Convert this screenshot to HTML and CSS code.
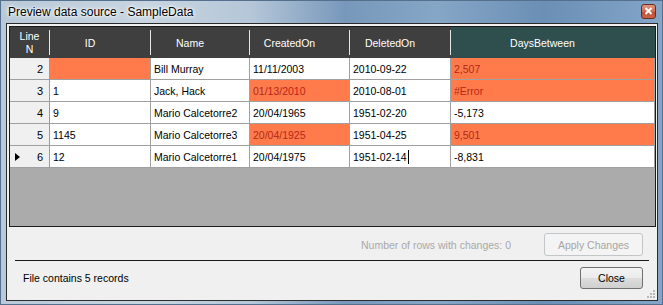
FILE: index.html
```html
<!DOCTYPE html>
<html lang="en">
<head>
    <meta charset="UTF-8">
    <title>Preview data source - SampleData</title>
    <link rel="stylesheet" href="styles.css">
</head>
<body>
    <div class="window">
        <div class="titlebar">
            <span class="title">Preview data source - SampleData</span>
            <span class="close-x">
                <svg width="9" height="8" viewBox="0 0 9 8"><path d="M1.5 1 L7.5 7 M7.5 1 L1.5 7" stroke="#fff" stroke-width="2"/></svg>
            </span>
        </div>
        <div class="client">
            <div class="grid">
                <div class="table">
                    <div class="hd corner">Line<br>N</div>
                    <div class="hd">ID</div>
                    <div class="hd">Name</div>
                    <div class="hd">CreatedOn</div>
                    <div class="hd">DeletedOn</div>
                    <div class="hd days">DaysBetween</div>

                    <div class="rh">2</div>
                    <div class="cell bad"></div>
                    <div class="cell">Bill Murray</div>
                    <div class="cell">11/11/2003</div>
                    <div class="cell">2010-09-22</div>
                    <div class="cell bad">2,507</div>

                    <div class="rh">3</div>
                    <div class="cell">1</div>
                    <div class="cell">Jack, Hack</div>
                    <div class="cell bad">01/13/2010</div>
                    <div class="cell">2010-08-01</div>
                    <div class="cell bad">#Error</div>

                    <div class="rh">4</div>
                    <div class="cell">9</div>
                    <div class="cell">Mario Calcetorre2</div>
                    <div class="cell">20/04/1965</div>
                    <div class="cell">1951-02-20</div>
                    <div class="cell">-5,173</div>

                    <div class="rh">5</div>
                    <div class="cell">1145</div>
                    <div class="cell">Mario Calcetorre3</div>
                    <div class="cell bad">20/04/1925</div>
                    <div class="cell">1951-04-25</div>
                    <div class="cell bad">9,501</div>

                    <div class="rh current"><span class="arrow"></span>6</div>
                    <div class="cell">12</div>
                    <div class="cell">Mario Calcetorre1</div>
                    <div class="cell">20/04/1975</div>
                    <div class="cell">1951-02-14<span class="caret"></span></div>
                    <div class="cell">-8,831</div>
                </div>
            </div>

            <div class="changes">
                <span class="changes-text">Number of rows with changes: 0</span>
                <button class="btn apply" disabled>Apply Changes</button>
            </div>
            <div class="sep"></div>
            <div class="status">
                <span>File contains 5 records</span>
                <button class="btn close">Close</button>
            </div>
            <svg class="grip" width="9" height="9" viewBox="0 0 9 9">
                <rect x="6" y="0" width="2" height="2" fill="#b8b8b8"/>
                <rect x="3" y="3" width="2" height="2" fill="#b8b8b8"/>
                <rect x="6" y="3" width="2" height="2" fill="#b8b8b8"/>
                <rect x="0" y="6" width="2" height="2" fill="#b8b8b8"/>
                <rect x="3" y="6" width="2" height="2" fill="#b8b8b8"/>
                <rect x="6" y="6" width="2" height="2" fill="#b8b8b8"/>
            </svg>
        </div>
    </div>
</body>
</html>
```

FILE: styles.css
```css
*{
    margin: 0;
    padding: 0;
    box-sizing: border-box;
}
body{
    width: 663px;
    height: 305px;
    overflow: hidden;
    font-family: "Liberation Sans", Arial, sans-serif;
    font-size: 10.5px;
    color: #000;
}
.window{
    width: 663px;
    height: 305px;
    background: linear-gradient(to right, #b9c9d8 0%, #c8d5e1 22%, #b4c6d8 38%, #7898bb 52%, #86a6c6 66%, #6b8fb5 82%, #82a5c8 100%);
    border: 1px solid #55708c;
}

.titlebar{
    height: 22px;
    display: flex;
    align-items: center;
    justify-content: space-between;
    padding: 0 6px 0 7px;
}
.title{
    font-size: 12px;
    text-shadow: 0 0 6px #fff, 0 0 3px #fff, 0 0 2px #fff;
}
.close-x{
    width: 15px;
    height: 15px;
    margin-top: -2px;
    border: 1px solid #6d2b1e;
    border-radius: 3px;
    background: linear-gradient(#e3967f 0%, #d26a4f 50%, #bf4a30 51%, #c9654b 100%);
    display: flex;
    align-items: center;
    justify-content: center;
}

.client{
    position: relative;
    width: 652px;
    height: 278px;
    margin-left: 5px;
    border: 1px solid #2b2b2b;
    background: #f0f0f0;
    padding: 0 0 0 0;
}

.grid{
    height: 201px;
    margin: 2px 1px 0 2px;
    border: 1px solid #1c1c1c;
    background: #ababab;
}
.table{
    display: grid;
    grid-template-columns: 40px 101px 99px 100px 101px 204px;
    grid-auto-rows: 22px;
    grid-template-rows: 31px;
}
.hd{
    background: linear-gradient(#e6e6e6, #e6e6e6) right 3px / 1px 25px no-repeat, #3f3f3f;
    color: #fff;
    display: flex;
    align-items: center;
    justify-content: center;
    padding-right: 21px;
}
.hd.corner{
    padding-right: 1px;
    text-align: center;
    line-height: 12.5px;
}
.hd.days{
    background: #2f4f4f;
}
.rh{
    background: #f0f0f0;
    border-right: 1px solid #9a9a9a;
    border-bottom: 1px solid #a0a0a0;
    display: flex;
    align-items: center;
    justify-content: flex-end;
    padding-right: 6px;
    font-size: 11px;
}
.rh.current{
    justify-content: space-between;
    padding-left: 5px;
}
.arrow{
    width: 0;
    height: 0;
    border-top: 4px solid transparent;
    border-bottom: 4px solid transparent;
    border-left: 5px solid #000;
}
.cell{
    background: #fff;
    border-right: 1px solid #a0a0a0;
    border-bottom: 1px solid #a0a0a0;
    display: flex;
    align-items: center;
    padding-left: 3px;
    white-space: nowrap;
    overflow: hidden;
}
.cell.bad{
    background: #ff7b4b;
    color: #b5271a;
}
.caret{
    display: inline-block;
    width: 1px;
    height: 14px;
    background: #000;
    margin-left: 1px;
}

.changes{
    display: flex;
    align-items: center;
    justify-content: flex-end;
    margin: 6px 14px 0 0;
    gap: 33px;
}
.changes-text{
    color: #a9a9a9;
}
.btn{
    font-family: "Liberation Sans", Arial, sans-serif;
    font-size: 10.5px;
    border-radius: 3px;
}
.apply{
    width: 99px;
    height: 23px;
    border: 1px solid #c2c6c9;
    background: #f4f4f4;
    color: #a6a6a6;
}
.sep{
    height: 1px;
    margin: 4px 8px 0 8px;
    background: #1a1a1a;
}
.status{
    display: flex;
    align-items: center;
    justify-content: space-between;
    margin: 6px 14px 0 16px;
}
.close{
    width: 63px;
    height: 22px;
    border: 1px solid #707070;
    background: linear-gradient(#f3f3f3 0%, #ebebeb 48%, #dddddd 52%, #cfcfcf 100%);
    color: #000;
}
.grip{
    position: absolute;
    right: 1px;
    bottom: 1px;
}
```
